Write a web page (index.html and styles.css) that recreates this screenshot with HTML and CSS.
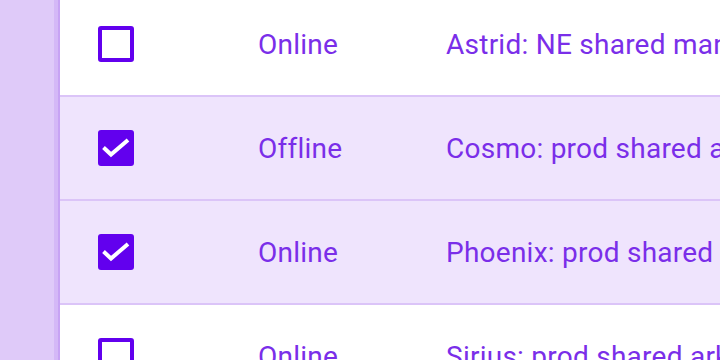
FILE: index.html
```html
<!DOCTYPE html>
<html>
<head>
<meta charset="utf-8">
<link rel="stylesheet" href="styles.css">
</head>
<body>
<div class="app">
  <aside class="sidebar"></aside>
  <main class="table">
    <div class="row">
      <div class="cell-check"><span class="checkbox"></span></div>
      <div class="cell-status">Online</div>
      <div class="cell-name">Astrid: NE shared managed cluster</div>
    </div>
    <div class="row selected">
      <div class="cell-check"><span class="checkbox checked"><svg viewBox="0 0 36 36" width="36" height="36"><polyline points="5.5,17.5 13,24.5 30,10" /></svg></span></div>
      <div class="cell-status">Offline</div>
      <div class="cell-name">Cosmo: prod shared ark cluster</div>
    </div>
    <div class="row selected">
      <div class="cell-check"><span class="checkbox checked"><svg viewBox="0 0 36 36" width="36" height="36"><polyline points="5.5,17.5 13,24.5 30,10" /></svg></span></div>
      <div class="cell-status">Online</div>
      <div class="cell-name">Phoenix: prod shared lyra cluster</div>
    </div>
    <div class="row">
      <div class="cell-check"><span class="checkbox"></span></div>
      <div class="cell-status">Online</div>
      <div class="cell-name">Sirius: prod shared ark cluster</div>
    </div>
  </main>
</div>
</body>
</html>
```
FILE: styles.css
```css
html, body {
  margin: 0;
  padding: 0;
  width: 720px;
  height: 360px;
  overflow: hidden;
  background: #ffffff;
}
.app {
  display: flex;
  height: 360px;
  font-family: Roboto, "Liberation Sans", sans-serif;
}
.sidebar {
  flex: 0 0 60px;
  height: 100%;
  background: linear-gradient(to right, #dfcaf9 0, #dfcaf9 54px, #d4b8f7 54px, #d4b8f7 58px, #c7a3f4 58px, #c7a3f4 60px);
}
.table {
  flex: 1;
  min-width: 0;
  margin-top: -7px;
  overflow: hidden;
}
.row {
  display: flex;
  align-items: center;
  height: 102px;
  border-bottom: 2px solid #dbc4f8;
  background: #ffffff;
  font-size: 28px;
  letter-spacing: 0.25px;
  color: #7a2ee9;
  white-space: nowrap;
}
.row.selected {
  background: #efe4fd;
}
.cell-check {
  flex: 0 0 160px;
  padding-left: 38px;
  display: flex;
  align-items: center;
}
.cell-status {
  flex: 0 0 188px;
}
.cell-name {
  flex: 1;
  min-width: 0;
  overflow: hidden;
}
.checkbox {
  display: block;
  width: 36px;
  height: 36px;
  box-sizing: border-box;
  border: 4px solid #6200ee;
  border-radius: 3px;
  position: relative;
}
.checkbox.checked {
  background: #6200ee;
}
.checkbox svg {
  position: absolute;
  left: -4px;
  top: -4px;
}
.checkbox polyline {
  fill: none;
  stroke: #ffffff;
  stroke-width: 4;
  stroke-linecap: butt;
  stroke-linejoin: miter;
}
```
